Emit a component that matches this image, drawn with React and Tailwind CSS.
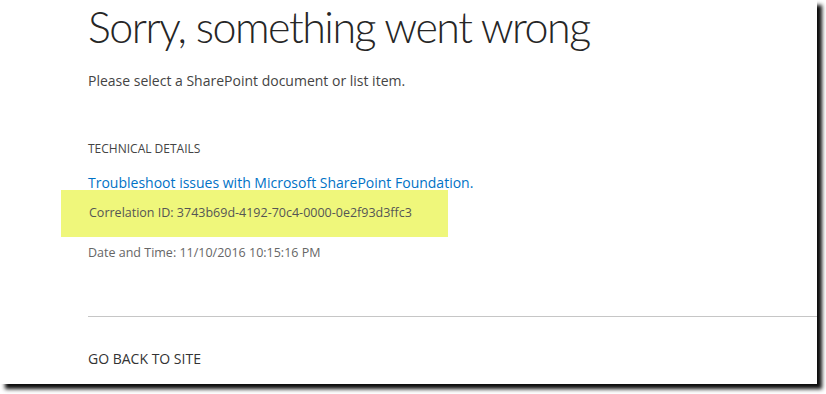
import React from 'react';

const App = () => {
    return (
        <div className="w-[826px] h-[394px] bg-white overflow-hidden" style={{ fontFamily: '"Open Sans", "Noto Sans", sans-serif' }}>
            <div className="w-[817px] h-[384px] bg-white shadow-[5px_5px_4px_rgba(0,0,0,0.95)] pl-[88px] flex flex-col">
                {/* Heading */}
                <h1 className="text-[43px] font-light text-[#262626] leading-[50px] mt-[2px] tracking-[-1.5px] [font-family:Lato,sans-serif]">
                    Sorry, something went wrong
                </h1>
                <p className="text-[14px] text-[#444] mt-[19px] leading-5">
                    Please select a SharePoint document or list item.
                </p>

                {/* Details */}
                <div className="mt-[50px] text-[12px] text-[#444] uppercase leading-4">Technical Details</div>
                <a className="mt-[16px] text-[14px] text-[#0072c6] leading-5 block">
                    Troubleshoot issues with Microsoft SharePoint Foundation.
                </a>
                <div className="-mt-[3px] -ml-[27px] w-[387px] h-[47px] bg-[#eff77b] pl-[28px] flex items-center text-[12.5px] text-[#555]">
                    Correlation ID: 3743b69d-4192-70c4-0000-0e2f93d3ffc3
                </div>
                <div className="mt-[8px] text-[12.5px] text-[#666] leading-4">
                    Date and Time: 11/10/2016 10:15:16 PM
                </div>

                <div className="mt-[55px] border-t border-[#c6c6c6]" />

                <div className="mt-[32px] text-[14px] text-[#333] leading-5 uppercase">Go back to site</div>
            </div>
        </div>
    );
};

export default App;
